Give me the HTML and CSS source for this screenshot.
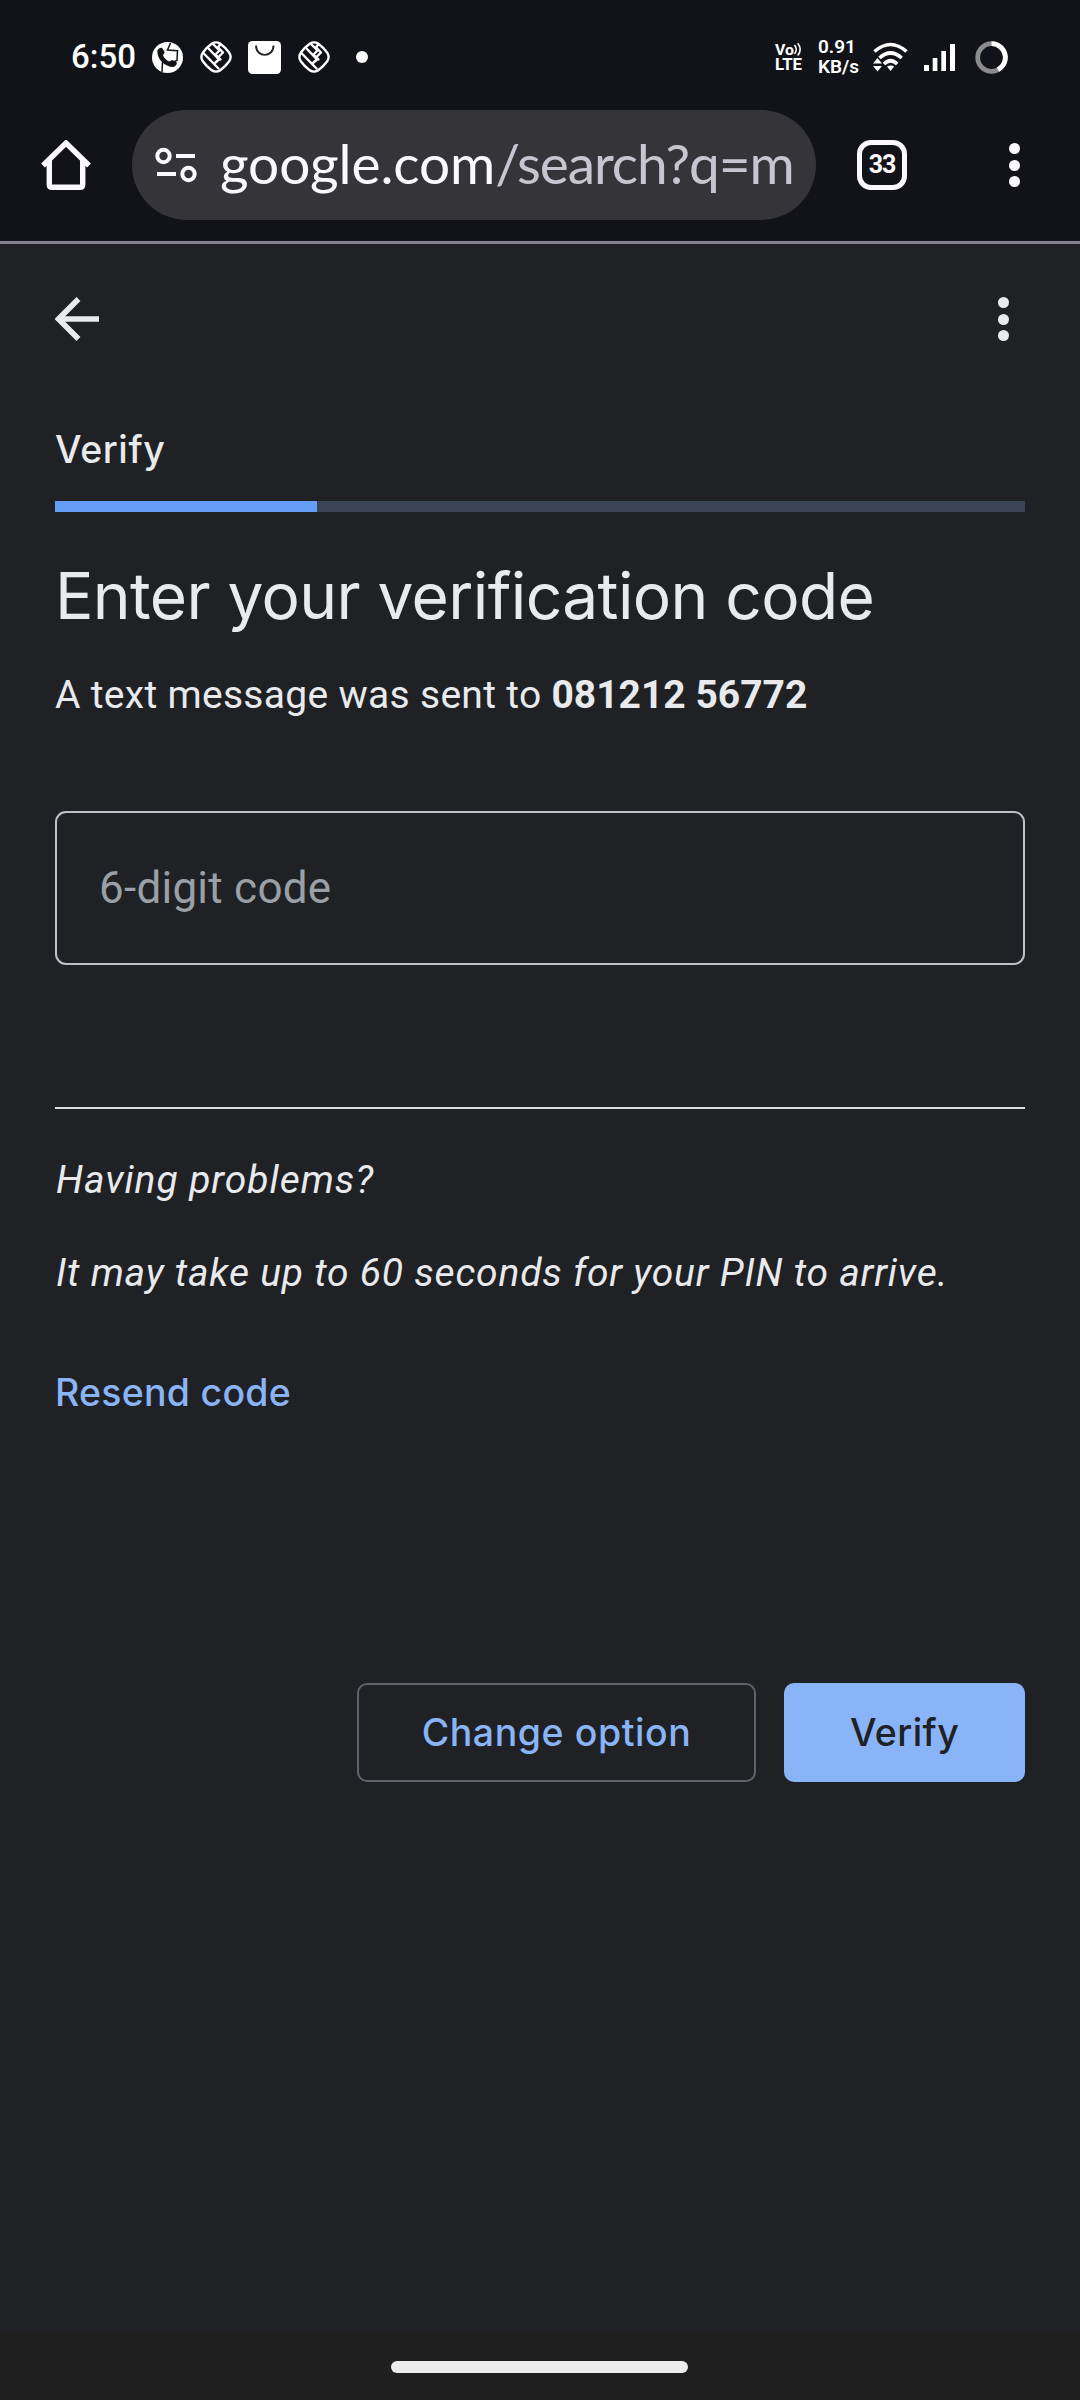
FILE: index.html
```html
<!DOCTYPE html>
<html lang="en">
<head>
<meta charset="utf-8">
<title>Verify</title>
<link rel="stylesheet" href="styles.css">
</head>
<body>
<svg width="0" height="0" class="defs" aria-hidden="true">
  <symbol id="knot" viewBox="0 0 32 32">
    <g fill="none" stroke="#fff" stroke-width="2.4" stroke-linejoin="round" stroke-linecap="round">
      <path d="M12 2.6Q16 .2 20 2.6Q25.500 6.500 29.400 12Q31.800 16 29.400 20Q25.500 25.500 20 29.400Q16 31.800 12 29.400Q6.500 25.500 2.600 20Q.2 16 2.600 12Q6.500 6.500 12 2.600Z"/>
      <path d="M3.800 12.500L18.500 27.500M8.500 7.500L19 18.500L15.500 21.500M13.500 3.500L19.500 9.500L15.500 13.500L20.500 18.500M20 3.800L18 6.300L23 11.500L19.500 15"/>
    </g>
  </symbol>
</svg>
<header class="status">
  <div class="status-left">
    <span class="clock">6:50</span>
    <svg class="phone" width="31" height="31" viewBox="0 0 31 31">
      <circle cx="15.500" cy="15.500" r="15.500" fill="#fff"/>
      <path d="M5.300 8.500C7 6 9 5.500 10.200 6L12.800 10.300L11 13.300C12 16 14.500 18.500 17.200 19.600L20.200 17.900L24.800 20.600C25 22.500 23.500 24.600 21.500 25C12.500 25 5 17 5.300 8.500Z" fill="#121318"/>
      <path d="M18.500 1L15.500 8L25.500 8.800L25 18.500L21 20M10.500 20L10 30" fill="none" stroke="#121318" stroke-width="1.500"/>
    </svg>
    <svg class="knot" width="32" height="32"><use href="#knot"/></svg>
    <svg class="bag" width="33" height="33" viewBox="0 0 33 33">
      <rect width="33" height="33" rx="4.500" fill="#fff"/>
      <path d="M8 4.500C8 17 25.500 17 25.500 4.500" fill="none" stroke="#26262a" stroke-width="1.900"/>
    </svg>
    <svg class="knot" width="32" height="32"><use href="#knot"/></svg>
    <span class="more-dot"></span>
  </div>
  <div class="status-right">
    <svg class="volte" width="28" height="32" viewBox="0 -1 28 32">
      <text x="0" y="13" font-size="15" textLength="19" lengthAdjust="spacingAndGlyphs">Vo</text>
      <path d="M19.500 3Q23 7.500 19.500 12M22.700 1.200Q27.800 7.500 22.700 13.500" fill="none" stroke="#fff" stroke-width="1.600"/>
      <text x="0" y="28" font-size="16.500" textLength="27" lengthAdjust="spacingAndGlyphs">LTE</text>
    </svg>
    <div class="speed"><span>0.91</span><span>KB/s</span></div>
    <svg class="wifi" width="35" height="30" viewBox="0 0 35 30">
      <g fill="none" stroke="#fff" stroke-width="3.600">
        <path d="M1.500 9.500Q17.500-4.500 33.500 9.500"/>
        <path d="M6.500 16Q17.500 6 28.700 16"/>
        <path d="M11 22Q17.500 15.500 24.200 22"/>
      </g>
      <path d="M14 24.500Q17.500 22.500 21.200 24.500L17.600 29ZM0 21.500L4.500 16L9 21.500ZM0 24L4.500 29.500L9 24Z" fill="#fff"/>
    </svg>
    <svg class="bars" width="31" height="27" viewBox="0 0 31 27">
      <path d="M0 21H5V27H0ZM8.700 14H13.400V27H8.700ZM17.300 7H22V27H17.300ZM26 0H31V27H26Z" fill="#fff"/>
    </svg>
    <svg class="ring" width="33" height="33" viewBox="0 0 33 33">
      <circle cx="16.500" cy="16.500" r="13.800" fill="none" stroke="#8b8b8e" stroke-width="4.800"/>
      <path d="M16.500 2.700A13.800 13.800 0 0 1 23 28.700" fill="none" stroke="#fff" stroke-width="4.800"/>
    </svg>
  </div>
</header>
<nav class="toolbar">
  <svg class="home" width="50" height="50" viewBox="0 0 50 50">
    <path d="M2 25.500L25 3L48 25.500M8.300 20V44.500Q8.300 47.300 11 47.300H39Q41.700 47.300 41.700 44.500V20" fill="none" stroke="#fbf8ff" stroke-width="5.400" stroke-linejoin="miter"/>
  </svg>
  <div class="omnibox">
    <svg class="tune" width="42" height="36" viewBox="0 0 42 36">
      <g fill="none" stroke="#fbf8ff" stroke-width="4">
        <circle cx="8.500" cy="9" r="6.200"/><path d="M21 9H40M2 27H21"/><circle cx="33.500" cy="27" r="6.200"/>
      </g>
    </svg>
    <span class="url">google.com<span class="path">/search?q=m</span></span>
  </div>
  <div class="tabs">33</div>
  <div class="dots light"><i></i><i></i><i></i></div>
</nav>
<main>
  <div class="appbar">
    <svg width="44" height="44" viewBox="0 0 44 44">
      <path d="M23.500 2L3.500 22L23.500 42M4 22H44" fill="none" stroke="#e8eaed" stroke-width="5.600"/>
    </svg>
    <div class="dots"><i></i><i></i><i></i></div>
  </div>
  <div class="step">Verify</div>
  <div class="progress"><div class="progress-value"></div></div>
  <h1>Enter your verification code</h1>
  <p class="sent">A text message was sent to <b>081212 56772</b></p>
  <div class="field">6-digit code</div>
  <hr>
  <p class="hint">Having problems?</p>
  <p class="hint wait">It may take up to 60 seconds for your PIN to arrive.</p>
  <a class="resend">Resend code</a>
  <div class="actions">
    <button class="outlined">Change option</button>
    <button class="filled">Verify</button>
  </div>
</main>
<footer><div class="handle"></div></footer>
</body>
</html>
```
FILE: styles.css
```css
* { box-sizing: border-box; margin: 0; padding: 0; }
body {
  width: 1080px;
  height: 2400px;
  display: flex;
  flex-direction: column;
  background: #202124;
  color: #e8eaed;
  font-family: Roboto, sans-serif;
  overflow: hidden;
}
svg { display: block; flex: none; }
.defs { position: absolute; }

.status {
  height: 110px;
  padding: 4px 72px 0 71px;
  display: flex;
  align-items: center;
  justify-content: space-between;
  background: #121318;
  color: #fff;
  font-weight: 500;
}
.status-left, .status-right { display: flex; align-items: center; }
.clock { width: 65px; margin-right: 16px; font-size: 33px; line-height: 40px; }
.phone, .bag { margin-right: 17px; }
.knot { margin-right: 16px; }
.bag + .knot { margin-right: 26px; }
.more-dot { width: 12px; height: 12px; border-radius: 50%; background: #fff; }
.volte { margin-right: 15px; fill: #fff; font-weight: 700; overflow: visible; }
.speed {
  display: flex;
  flex-direction: column;
  width: 41px;
  margin-right: 14px;
  font-size: 19px;
  font-weight: 600;
  line-height: 20px;
}
.wifi { margin-right: 16px; }
.bars { margin-right: 20px; }

.toolbar {
  height: 134px;
  padding: 0 60px 21px 41px;
  display: flex;
  align-items: center;
  background: #121318;
  border-bottom: 3px solid #84808e;
}
.omnibox {
  width: 684px;
  height: 110px;
  margin: 0 41px;
  padding-left: 23px;
  display: flex;
  align-items: center;
  border-radius: 55px;
  background: #343439;
}
.url {
  margin-left: 23px;
  padding-bottom: 4px;
  font: 55px/60px Lato, sans-serif;
  letter-spacing: -0.100px;
  color: #fbf8ff;
  white-space: nowrap;
}
.path { color: #c8c5d0; letter-spacing: -1.050px; }
.tabs {
  width: 50px;
  height: 50px;
  border: 5.500px solid #fbf8ff;
  border-radius: 14px;
  color: #fbf8ff;
  font-size: 25px;
  font-weight: 700;
  line-height: 40px;
  letter-spacing: -1px;
  text-align: center;
}
.dots {
  margin-left: auto;
  display: flex;
  flex-direction: column;
  gap: 5.500px;
}
.dots i { width: 11px; height: 11px; border-radius: 50%; background: #e8eaed; }
.dots.light i { background: #fbf8ff; }

main { flex: 1; padding: 0 55px; }
.appbar { height: 150px; display: flex; align-items: center; }
.appbar .dots { margin-right: 16px; }
.step, .resend, button {
  font: 500 37.500px/48px Inter, sans-serif;
}
.step { margin-top: 32px; letter-spacing: 0.600px; }
.progress { height: 11px; margin-top: 27px; background: #3c4557; }
.progress-value { width: 262px; height: 100%; background: #669df6; }
h1 {
  margin-top: 46px;
  font: 400 64px/76px Inter, sans-serif;
  letter-spacing: -0.600px;
  white-space: nowrap;
}
.sent { margin-top: 36px; font-size: 39px; line-height: 50px; letter-spacing: 0.300px; }
.sent b { letter-spacing: 0; }
.field {
  height: 154px;
  margin-top: 91px;
  padding-left: 42px;
  border: 2px solid #bdc1c6;
  border-radius: 11px;
  color: #9aa0a6;
  font-size: 44px;
  line-height: 150px;
  letter-spacing: 0.250px;
}
hr { margin-top: 142px; height: 2px; border: 0; background: #dadce0; }
.hint {
  margin-top: 46px;
  padding-left: 1px;
  font-size: 39px;
  font-style: italic;
  line-height: 50px;
  letter-spacing: 0.950px;
  white-space: nowrap;
}
.wait { margin-top: 43px; letter-spacing: 0.800px; }
.resend { display: block; margin-top: 71px; color: #8ab4f8; letter-spacing: 0.250px; }
.actions {
  margin-top: 266px;
  display: flex;
  justify-content: flex-end;
  gap: 28px;
}
button {
  height: 99px;
  border: 0;
  border-radius: 10px;
}
.outlined {
  width: 399px;
  border: 2px solid #5f6368;
  background: transparent;
  color: #8ab4f8;
  letter-spacing: 0.550px;
}
.filled { width: 241px; background: #8ab4f8; color: #202124; letter-spacing: 0.400px; }

footer {
  height: 69px;
  padding: 30px 0 0 391px;
  background: #1f1f1f;
}
.handle { width: 297px; height: 12px; border-radius: 6px; background: #ececec; }
```
